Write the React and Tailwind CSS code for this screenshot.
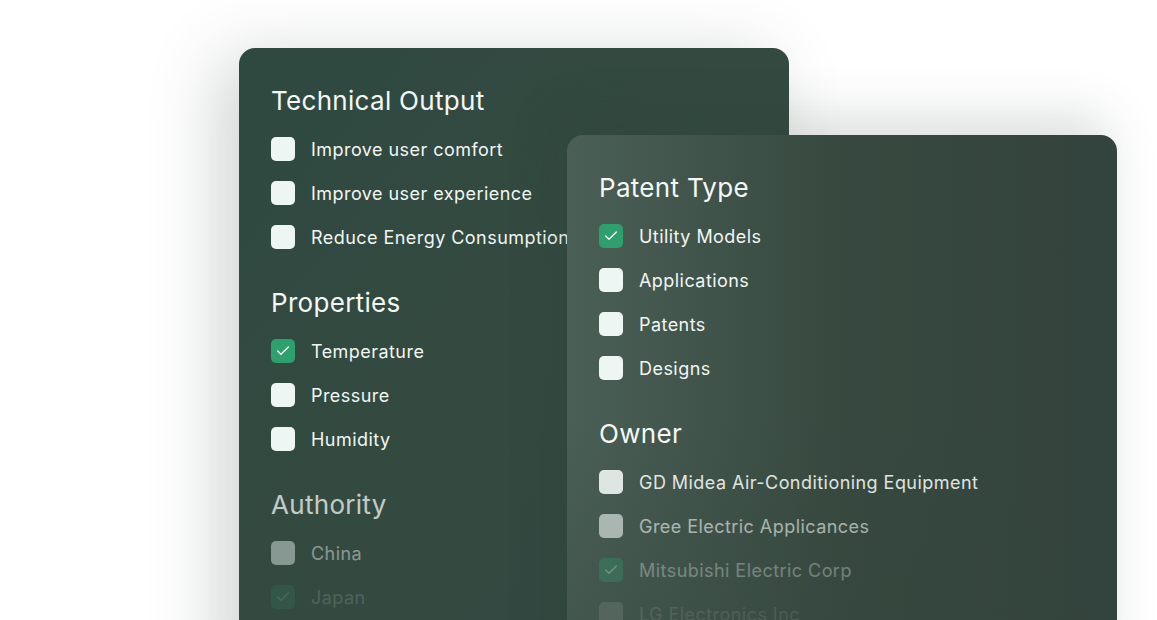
import React from 'react';
import { Check } from 'lucide-react';

function Box({ checked }) {
  if (checked) {
    return (
      <span className="w-6 h-6 rounded-[5px] bg-[#2e9f6e] flex items-center justify-center shrink-0">
        <Check className="w-4 h-4 text-white" strokeWidth={2} />
      </span>
    );
  }
  return <span className="w-6 h-6 rounded-[5px] bg-[#eef6f3] shrink-0" />;
}

function Row({ label, checked, fade = 'opacity-100' }) {
  return (
    <div className={`flex items-center gap-4 h-11 ${fade}`}>
      <Box checked={checked} />
      <span className="text-[18px] text-[#f1f6f3] whitespace-nowrap tracking-[0.45px]">{label}</span>
    </div>
  );
}

function Heading({ children, fade = 'opacity-100', className = '' }) {
  return (
    <h2 className={`text-[26px] h-[26px] leading-[26px] text-[#f3f7f5] font-normal tracking-[0.3px] ${fade} ${className}`}>
      {children}
    </h2>
  );
}

export default function App() {
  return (
    <div className="relative w-[1157px] h-[620px] overflow-hidden bg-white" style={{ fontFamily: 'Inter, "Noto Sans", sans-serif' }}>
      {/* back card */}
      <div className="absolute left-[239px] top-[48px] w-[550px] h-[640px] rounded-2xl bg-gradient-to-br from-[#2f4940] via-[#344a41] to-[#33463f] shadow-[-20px_10px_70px_rgba(40,60,50,0.22)] overflow-hidden">
        <div className="flex flex-col pl-8 pt-10">
          <Heading>Technical Output</Heading>
          <div className="flex flex-col mt-[13px]">
            <Row label="Improve user comfort" />
            <Row label="Improve user experience" />
            <Row label="Reduce Energy Consumption" />
          </div>
          <Heading className="mt-[31px]">Properties</Heading>
          <div className="flex flex-col mt-[13px]">
            <Row label="Temperature" checked />
            <Row label="Pressure" />
            <Row label="Humidity" />
          </div>
          <Heading className="mt-[31px]" fade="opacity-75">Authority</Heading>
          <div className="flex flex-col mt-[13px]">
            <Row label="China" fade="opacity-45" />
            <Row label="Japan" checked fade="opacity-[0.14]" />
          </div>
        </div>
      </div>

      {/* front card */}
      <div className="absolute left-[567px] top-[135px] w-[550px] h-[560px] rounded-2xl bg-gradient-to-r from-[#4a5f56] via-[#37493f] to-[#33433d] shadow-[-10px_-20px_50px_rgba(40,60,50,0.16)] overflow-hidden">
        <div className="absolute inset-0 bg-gradient-to-b from-transparent via-transparent to-[#33443d]/40" />
        <div className="relative flex flex-col pl-8 pt-10">
          <Heading>Patent Type</Heading>
          <div className="flex flex-col mt-[13px]">
            <Row label="Utility Models" checked />
            <Row label="Applications" />
            <Row label="Patents" />
            <Row label="Designs" />
          </div>
          <Heading className="mt-[31px]">Owner</Heading>
          <div className="flex flex-col mt-[13px]">
            <Row label="GD Midea Air-Conditioning Equipment" fade="opacity-90" />
            <Row label="Gree Electric Applicances" fade="opacity-60" />
            <Row label="Mitsubishi Electric Corp" checked fade="opacity-[0.32]" />
            <Row label="LG Electronics Inc" fade="opacity-[0.1]" />
          </div>
        </div>
      </div>
    </div>
  );
}
